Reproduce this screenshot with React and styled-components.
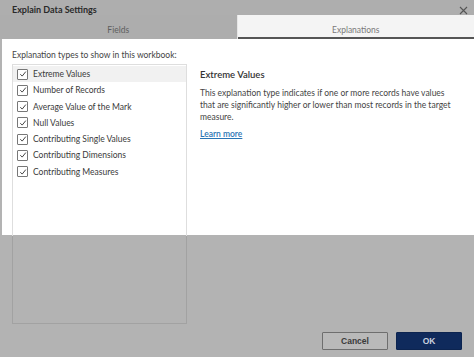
import React from "react";
import styled, { createGlobalStyle } from "styled-components";

const GlobalStyle = createGlobalStyle`
  html, body {
    margin: 0;
    padding: 0;
  }
  body {
    font-family: Lato, "Open Sans", "Liberation Sans", sans-serif;
    color: #333;
  }
`;

const WHITE_HEIGHT = 196;

const Dialog = styled.div`
  width: 474px;
  height: 357px;
  display: flex;
  flex-direction: column;
  background: #b3b3b3;
  overflow: hidden;
`;

const TitleBar = styled.div`
  height: 16px;
  display: flex;
  align-items: center;
  justify-content: space-between;
  padding: 3px 6px 0 12px;
  box-sizing: border-box;
  background: #aeaeae;
  font-size: 9px;
  font-weight: 700;
  color: #2a2a2a;
`;

const CloseButton = styled.span`
  display: flex;
  margin-top: 2px;
`;

const TabRow = styled.div`
  height: 26px;
  display: flex;
  background: #adadad;
`;

const Tab = styled.div`
  flex: 1;
  display: flex;
  align-items: center;
  justify-content: center;
  font-size: 8.5px;
  color: ${({ active }) => (active ? "#7a7a7a" : "#5e5e5e")};
  background: ${({ active }) => (active ? "#f4f4f4" : "transparent")};
  border-left: ${({ active }) => (active ? "1px solid #e6e6e6" : "none")};
  box-shadow: ${({ active }) => (active ? "inset 0 -2px 0 #555" : "none")};
  padding-top: 5px;
`;

const Body = styled.div`
  flex: 1;
  display: flex;
  flex-direction: column;
  background: linear-gradient(#fff, #fff) 2px 0 / calc(100% - 2px) ${WHITE_HEIGHT}px no-repeat,
    #b3b3b3;
`;

const Content = styled.div`
  flex: 1;
  display: flex;
  padding: 10px 20px 0 12px;
  gap: 13px;
`;

const LeftColumn = styled.div`
  display: flex;
  flex-direction: column;
`;

const Heading = styled.div`
  height: 12px;
  line-height: 12px;
  font-size: 8.5px;
  color: #444;
  margin-bottom: 3px;
`;

const TypeList = styled.ul`
  list-style: none;
  margin: 0;
  padding: 1px 0 0;
  width: 173px;
  height: 257px;
  border: 1px solid;
  border-image: linear-gradient(to bottom, #dedede 172px, #a2a2a2 172px) 1;
`;

const TypeItem = styled.li`
  height: 16.25px;
  display: flex;
  align-items: center;
  gap: 5px;
  padding-left: 4px;
  font-size: 8.5px;
  color: #3a3a3a;
  background: ${({ selected }) => (selected ? "#f1f1f1" : "transparent")};
`;

const Box = styled.span`
  width: 9px;
  height: 9px;
  border: 1px solid #777;
  border-radius: 1px;
  display: flex;
  align-items: center;
  justify-content: center;
  background: #fff;
`;

const Detail = styled.div`
  flex: 1;
  display: flex;
  flex-direction: column;
  padding-top: 20px;
`;

const DetailTitle = styled.div`
  font-size: 9.5px;
  font-weight: 600;
  color: #333;
  line-height: 12px;
  margin-bottom: 6px;
`;

const DetailText = styled.p`
  margin: 0 0 5px;
  font-size: 8.5px;
  line-height: 12px;
  color: #444;
`;

const LearnMore = styled.a`
  align-self: flex-start;
  font-size: 8.5px;
  line-height: 12px;
  color: #2a74b4;
  text-decoration: underline;
  font-weight: 600;
`;

const Footer = styled.div`
  display: flex;
  justify-content: flex-end;
  gap: 8px;
  padding: 8px 12px 7px;
`;

const Button = styled.button`
  width: 66px;
  height: 18px;
  padding: 0;
  font-family: "Liberation Sans", Arial, sans-serif;
  font-size: 8.5px;
  font-weight: 700;
  border-radius: 1px;
  border: 1px solid ${({ primary }) => (primary ? "#0c2450" : "#6e6e6e")};
  background: ${({ primary }) => (primary ? "#0f2a5c" : "#b9b9b9")};
  color: ${({ primary }) => (primary ? "#c9d0de" : "#3a3a3a")};
`;

const Check = () => (
  <Box>
    <svg width="8" height="8" viewBox="0 0 8 8">
      <path d="M1.3 4.2 L3.2 6.1 L6.8 1.6" fill="none" stroke="#444" strokeWidth="1" />
    </svg>
  </Box>
);

const TYPES = [
  "Extreme Values",
  "Number of Records",
  "Average Value of the Mark",
  "Null Values",
  "Contributing Single Values",
  "Contributing Dimensions",
  "Contributing Measures",
];

export default function App() {
  return (
    <>
      <GlobalStyle />
      <Dialog>
        <TitleBar>
          Explain Data Settings
          <CloseButton>
            <svg width="9" height="9" viewBox="0 0 9 9">
              <path d="M1 1 L8 8 M8 1 L1 8" stroke="#555" strokeWidth="1.1" />
            </svg>
          </CloseButton>
        </TitleBar>
        <TabRow>
          <Tab>Fields</Tab>
          <Tab active>Explanations</Tab>
        </TabRow>
        <Body>
          <Content>
            <LeftColumn>
              <Heading>Explanation types to show in this workbook:</Heading>
              <TypeList>
                {TYPES.map((t, i) => (
                  <TypeItem key={t} selected={i === 0}>
                    <Check />
                    {t}
                  </TypeItem>
                ))}
              </TypeList>
            </LeftColumn>
            <Detail>
              <DetailTitle>Extreme Values</DetailTitle>
              <DetailText>
                This explanation type indicates if one or more records have values that are
                significantly higher or lower than most records in the target measure.
              </DetailText>
              <LearnMore href="#">Learn more</LearnMore>
            </Detail>
          </Content>
          <Footer>
            <Button>Cancel</Button>
            <Button primary>OK</Button>
          </Footer>
        </Body>
      </Dialog>
    </>
  );
}
